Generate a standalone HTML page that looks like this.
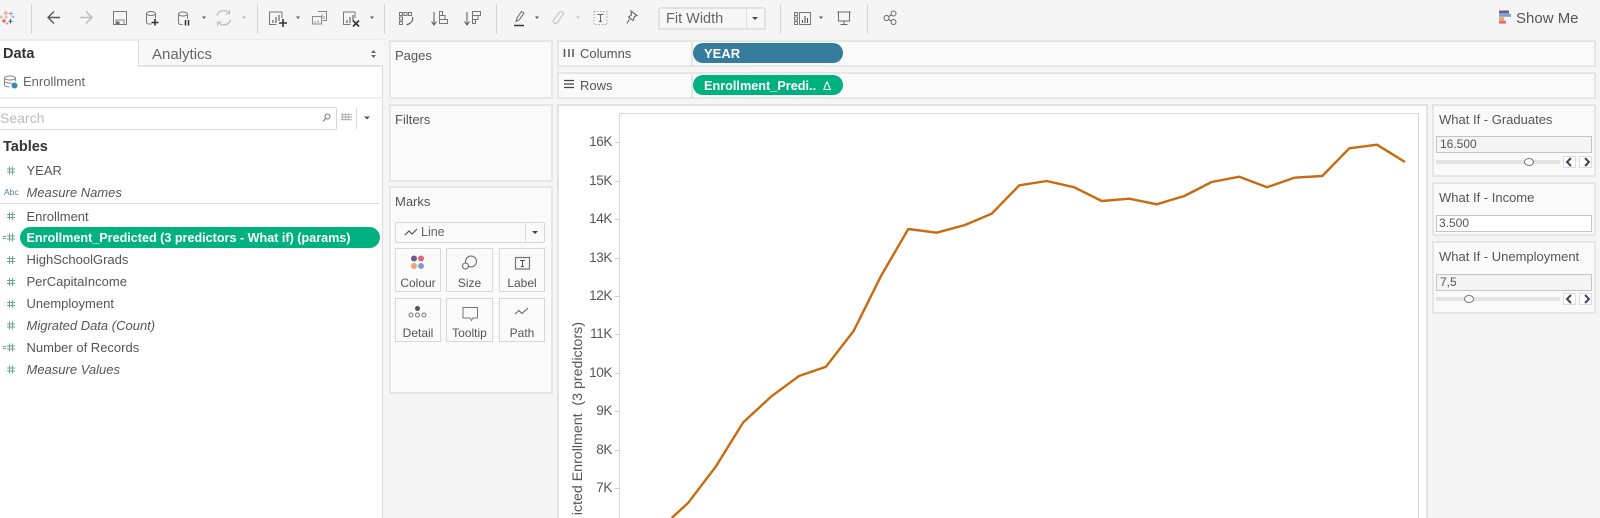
<!DOCTYPE html>
<html><head><meta charset="utf-8"><style>
html,body{margin:0;padding:0;width:1600px;height:518px;overflow:hidden;background:#f5f5f5;font-family:"Liberation Sans",sans-serif;color:#555}
#root{position:absolute;left:0;top:0;width:1600px;height:518px;overflow:hidden;background:#f5f5f5}
div,span{position:absolute;box-sizing:border-box}
span{white-space:nowrap}
.p{background:#fafafa;border:2px solid #e6e6e6}
.t{font-size:13px;color:#555;line-height:16px}
.i{font-style:italic}
.sep{top:4px;width:1px;height:30px;background:#d4d4d4}
.row{left:26.5px;font-size:13px;line-height:16px;color:#555}
.b{background:#fafafa;border:1px solid #d8d8d8;height:44px}
.bl{left:0;right:0;text-align:center;top:26.5px;font-size:12px;line-height:15px;color:#555}
.in{left:1436px;width:156px;height:17px;border:1px solid #c4c4c4;font-size:12px;line-height:15px;color:#555;padding-left:3px}
.sl{left:1436px;width:124px;height:4px;background:#e4e4e4}
.th{width:10px;height:8px;border:1px solid #777;border-radius:50%;background:#fff}
.nb{width:13px;height:12px;background:#fff;border:1px solid #ddd}
.tk{left:615px;width:4px;height:1px;background:#ccc}
.yl{right:988px;font-size:13.5px;letter-spacing:-.4px;color:#555;line-height:16px}
svg{position:absolute;left:0;top:0}
</style></head><body><div id="root">

<svg width="1600" height="40" fill="none" stroke="#777" stroke-width="1">
<!-- logo -->
<g stroke-width="1">
<path d="M6 10.5v5M3.500 13h5" stroke="#e8976b"/>
<path d="M6 15v4M4 17h4" stroke="#f0b79a"/>
<path d="M11 11.500v4M9 13.500h4" stroke="#7fa8bf"/>
<path d="M4 19v4M2 21h4" stroke="#d64550"/>
<path d="M10.500 19v4.500M8.500 21.300h4" stroke="#2c5c8f"/>
<path d="M1 15.500v3M0 17h2.500" stroke="#e8a07a"/>
<path d="M13 15.500v3M11.500 17h3" stroke="#8fb0c4"/>
<path d="M7 22v3M5.500 23.500h3" stroke="#e8a07a"/>
</g>
<!-- back/forward -->
<path d="M60 17.500H48M54 11.500l-6 6 6 6" stroke="#555" stroke-width="1.400"/>
<path d="M80 17.500h12M86 11.500l6 6-6 6" stroke="#bbb" stroke-width="1.400"/>
<!-- save -->
<path d="M113.500 11.500h13v13h-13z"/><path d="M116 24v-4h8v4" stroke="#888"/><path d="M116.500 21.500h3v2.500h-3z" fill="#666" stroke="none"/>
<!-- add data -->
<ellipse cx="151" cy="13.500" rx="4.500" ry="2"/><path d="M146.500 13.500v9q0 1.500 3 1.500h2M155.500 13.500v5"/><path d="M155 19v6.500M151.500 22.500h7" stroke="#333" stroke-width="1.600"/>
<!-- pause -->
<ellipse cx="183" cy="14" rx="4.500" ry="2"/><path d="M178.500 14v9q0 1.500 3 1.500h1M187.500 14v5"/><path d="M185.500 20v5.500M188.500 20v5.500" stroke="#333" stroke-width="1.500"/>
<path d="M202 16.500h4l-2 2.500z" fill="#555" stroke="none"/>
<!-- refresh -->
<path d="M217 15.500a7 7 0 0 1 12-2.500M230.500 20a7 7 0 0 1-12 2.500" stroke="#bbb" stroke-width="1.300"/><path d="M229.500 10v4h-4M217.500 26v-4h4" stroke="#bbb"/>
<path d="M242 16.500h4l-2 2.500z" fill="#bbb" stroke="none"/>
<!-- add chart -->
<path d="M282 12h-12.500v12.500h7"/><path d="M282 12v6"/><path d="M273 23v-3M276 23v-6M279 21v-6" stroke="#666" stroke-width="1.200"/><path d="M283 19v8M279 23h8" stroke="#333" stroke-width="1.600"/>
<path d="M296 16.500h4l-2 2.500z" fill="#555" stroke="none"/>
<!-- duplicate -->
<path d="M318 11.500h8.500v9h-4M312.500 16.500h9v7.500h-9z" stroke="#888"/><path d="M315 23v-2M318 23v-3M322 19v-5M324 19v-3" stroke="#999"/>
<!-- clear -->
<path d="M355 12h-11.500v12.500h7M355 12v6"/><path d="M347 23v-3M350 23v-6M353 21v-6" stroke="#666" stroke-width="1.200"/><path d="M353 20.500l6 6M359 20.500l-6 6" stroke="#333" stroke-width="1.600"/>
<path d="M370 16.500h4l-2 2.500z" fill="#555" stroke="none"/>
<!-- swap -->
<path d="M399.500 12.500h3v3h-3zM404 12.500h3v3h-3zM408.500 12.500h3v3h-3zM399.500 17h3v3h-3zM399.500 21.500h3v3h-3z"/><path d="M412.500 17c1 4-2 7-6 7.500" stroke="#555"/><path d="M410.500 23l-3 2" stroke="#555"/>
<!-- sort asc -->
<path d="M434 12v12M431.500 21.500l2.500 3.500 2.500-3.500" stroke="#555"/><path d="M439.500 11.500h3v4h-3zM439.500 15.500h5.500v4h-5.500zM439.500 19.500h8v4h-8z"/>
<!-- sort desc -->
<path d="M467 12v12M464.500 21.500l2.500 3.500 2.500-3.500" stroke="#555"/><path d="M472.500 11.500h8v4h-8zM472.500 15.500h5.500v4h-5.500zM472.500 19.500h3v4h-3z"/>
<!-- highlight -->
<path d="M516 21.500l1-3.500 4.500-6.500 2.500 1.500-4.500 6.500z" stroke="#666"/><path d="M514 25.500h10" stroke="#333" stroke-width="1.500"/>
<path d="M535 16.500h4l-2 2.500z" fill="#555" stroke="none"/>
<!-- clip -->
<path d="M554 19l6-7q3-1.500 3.500 1.500l-6 9q-2 2-3.500 .5t0-4l5-6" stroke="#c4c4c4" stroke-width="1.200"/>
<path d="M576 16.500h4l-2 2.500z" fill="#c4c4c4" stroke="none"/>
<!-- text -->
<path d="M594 11.500h13v13h-13z" stroke="#aaa" stroke-dasharray="1.500 1.500"/><path d="M597.500 14.500h6M600.500 14.500v7M599 21.500h3" stroke="#666"/>
<!-- pin -->
<path d="M631 11l6 4.500-2.500 1-1.500 4-4.500-3.500 3-2zM629.500 19l-2.500 4.500" stroke="#666" stroke-width="1.100"/>
<!-- show mark labels -->
<path d="M794.500 12.500h3v3h-3zM794.500 17h3v3h-3zM794.500 21.500h3v3h-3zM799.500 12.500h11v12h-11z"/><path d="M802.500 23v-3M805 23v-7M807.500 23v-5" stroke="#555" stroke-width="1.100"/>
<path d="M819 16.500h4l-2 2.500z" fill="#555" stroke="none"/>
<!-- presentation -->
<path d="M837 12h14M838.500 12.500v8.500h11v-8.500M844 21v3.500M840.500 24.500h7" stroke="#666"/>
<!-- share -->
<circle cx="886.500" cy="18" r="2.500" stroke="#666"/><circle cx="893.500" cy="13.500" r="2.500" stroke="#666"/><circle cx="893.500" cy="22" r="2.500" stroke="#666"/><path d="M888.500 16.500l3-1.500M888.700 19.500l3 1.500" stroke="#666"/>
<!-- show me icon -->
<g stroke="none"><rect x="1499" y="10.500" width="10" height="3" fill="#6d5b8f"/><rect x="1499" y="13.800" width="12" height="3" fill="#7ba7c9"/><rect x="1499" y="17.200" width="5" height="3" fill="#eda36e"/><rect x="1499" y="20.600" width="7" height="3" fill="#ea6a6a"/></g>
</svg>
<div class="sep" style="left:31px"></div><div class="sep" style="left:257px"></div><div class="sep" style="left:384px"></div><div class="sep" style="left:496px"></div><div class="sep" style="left:780px"></div><div class="sep" style="left:867px"></div>
<div style="left:658px;top:7px;width:108px;height:23px;border:2px solid #e2e2e2;border-radius:2px;background:#f7f7f7"></div>
<div style="left:746px;top:8px;width:1px;height:21px;background:#e0e0e0"></div>
<span style="left:666px;top:10px;font-size:14.5px;line-height:18px;color:#666">Fit Width</span>
<svg width="1600" height="40"><path d="M752 17h6l-3 3z" fill="#444"/></svg>
<span style="left:1516px;top:9.5px;font-size:15px;line-height:18px;color:#555">Show Me</span>

<!-- left pane -->
<div style="left:0;top:40px;width:383px;height:478px;background:#fff;border-right:1px solid #dcdcdc"></div>
<div style="left:0;top:39px;width:383px;height:2px;background:#ececec"></div>
<div style="left:138px;top:40px;width:245px;height:27px;background:#f8f8f8;border-left:1px solid #ddd;border-bottom:2px solid #e4e4e4"></div>
<span style="left:3px;top:45px;font-size:14.5px;font-weight:bold;line-height:18px;color:#333">Data</span>
<span style="left:152px;top:46px;font-size:15px;line-height:18px;color:#666">Analytics</span>
<svg width="383" height="100"><path d="M371 53l2.500-3 2.500 3zM371 55l2.500 3 2.500-3z" fill="#666"/>
<ellipse cx="10" cy="78" rx="5.500" ry="2" fill="none" stroke="#888"/><path d="M4.500 78v7q0 1.500 5 2M15.500 78v3" fill="none" stroke="#888"/><path d="M5 82q3 1.500 7 1" fill="none" stroke="#888"/><circle cx="14.500" cy="85.500" r="3" fill="#3d86b0"/></svg>
<span style="left:23px;top:74px;font-size:13px;line-height:16px;color:#666">Enrollment</span>
<div style="left:0;top:97px;width:382px;height:2px;background:#f0f0f0"></div>
<div style="left:-2px;top:107px;width:339px;height:23px;border:1px solid #d6d6d6;border-radius:2px;background:#fff"></div>
<span style="left:0;top:110px;font-size:14px;line-height:17px;color:#bbb">Search</span>
<svg width="383" height="135" style="z-index:2" fill="none"><circle cx="327.500" cy="116.500" r="2.500" stroke="#777"/><path d="M325.500 118.500l-2.500 3" stroke="#777"/>
<path d="M341.500 114.500h10M341.500 117h10M341.500 119.500h10" stroke="#888" stroke-width="1.500" stroke-dasharray="2 1"/>
<path d="M356.500 107.500v22" stroke="#ddd"/><path d="M364 116.500h6l-3 3z" fill="#555"/></svg>
<span style="left:3px;top:138px;font-size:14.5px;font-weight:bold;line-height:18px;color:#333">Tables</span>
<span class="row" style="top:163px">YEAR</span>
<span style="left:4px;top:187px;font-size:8.5px;line-height:11px;color:#4f7f9f">Abc</span><span class="row i" style="top:185px">Measure Names</span>
<div style="left:0;top:203px;width:380px;height:1px;background:#dcdcdc"></div>
<span class="row" style="top:209px">Enrollment</span>
<div style="left:20px;top:227px;width:360px;height:21px;border-radius:11px;background:#00b180"></div>
<span class="row" style="top:230px;color:#fff;font-weight:bold;font-size:12.6px">Enrollment_Predicted (3 predictors - What if) (params)</span>
<span class="row" style="top:252px">HighSchoolGrads</span>
<span class="row" style="top:274px">PerCapitaIncome</span>
<span class="row" style="top:296px">Unemployment</span>
<span class="row i" style="top:318px">Migrated Data (Count)</span>
<span class="row" style="top:340px">Number of Records</span>
<span class="row i" style="top:362px">Measure Values</span>
<svg width="40" height="400" fill="none" stroke="#6aa892" stroke-width="1">
<path d="M9.500 166.500v8M12.500 166.500v8M7 169h8M7 172h8"/>
<path d="M9.500 212v8M12.500 212v8M7 214.500h8M7 217.500h8"/>
<path d="M9.500 233.500v8M12.500 233.500v8M7 236h8M7 239h8M3 236.500h3M3 238.500h3"/>
<path d="M9.500 256v8M12.500 256v8M7 258.500h8M7 261.500h8"/>
<path d="M9.500 278v8M12.500 278v8M7 280.500h8M7 283.500h8"/>
<path d="M9.500 300v8M12.500 300v8M7 302.500h8M7 305.500h8"/>
<path d="M9.500 321.500v8M12.500 321.500v8M7 324h8M7 327h8"/>
<path d="M9.500 343.500v8M12.500 343.500v8M7 346h8M7 349h8M3 346.500h3M3 348.500h3"/>
<path d="M9.500 365.500v8M12.500 365.500v8M7 368h8M7 371h8"/>
</svg>

<!-- cards -->
<div class="p" style="left:389px;top:40px;width:164px;height:59px"></div>
<span class="t" style="left:395px;top:48px">Pages</span>
<div class="p" style="left:389px;top:104px;width:164px;height:78px"></div>
<span class="t" style="left:395px;top:112px">Filters</span>
<div class="p" style="left:389px;top:186px;width:164px;height:208px"></div>
<span class="t" style="left:395px;top:194px">Marks</span>
<div style="left:395px;top:222px;width:150px;height:21px;border:1px solid #d8d8d8;background:#fafafa;border-radius:2px"></div>
<div style="left:525px;top:223px;width:1px;height:19px;background:#ddd"></div>
<span style="left:421px;top:225px;font-size:12.5px;line-height:15px;color:#666">Line</span>
<div class="b" style="left:395px;top:248px;width:46px"><span class="bl">Colour</span></div>
<div class="b" style="left:446px;top:248px;width:47px"><span class="bl">Size</span></div>
<div class="b" style="left:499px;top:248px;width:46px"><span class="bl">Label</span></div>
<div class="b" style="left:395px;top:298px;width:46px"><span class="bl">Detail</span></div>
<div class="b" style="left:446px;top:298px;width:47px"><span class="bl">Tooltip</span></div>
<div class="b" style="left:499px;top:298px;width:46px"><span class="bl">Path</span></div>
<svg width="1600" height="400" fill="none" style="z-index:2">
<path d="M405 235l4-4 3 3 5-5" stroke="#555" stroke-width="1.200"/><path d="M532 231h6l-3 3z" fill="#444"/>
<circle cx="414" cy="258.500" r="3" fill="#6d5b8f"/><circle cx="421" cy="258.500" r="3" fill="#e8637a"/><circle cx="414" cy="266" r="3" fill="#eda36e"/><circle cx="421" cy="266" r="3" fill="#7c9fcf"/>
<circle cx="471" cy="261.500" r="5.500" stroke="#666"/><circle cx="465.500" cy="266" r="3" stroke="#666" fill="#fafafa"/>
<path d="M515.500 257.500h14v11.500h-14z" stroke="#777" stroke-width="1.200"/><path d="M520 260.500h5M522.500 260.500v6M521 266.500h3" stroke="#555"/>
<circle cx="417.500" cy="308.500" r="2.500" fill="#555"/><circle cx="411" cy="315" r="2" stroke="#777"/><circle cx="417.500" cy="315" r="2" stroke="#777"/><circle cx="424" cy="315" r="2" stroke="#777"/>
<path d="M463 307.500h14.500v10.500h-4.500l-1.500 2.500-1.500-2.500h-7z" stroke="#777"/>
<path d="M515 314l4-3.500 3 3 6-5.500" stroke="#666" stroke-width="1.100"/>
</svg>

<div class="p" style="left:557px;top:40px;width:1039px;height:27px"></div>
<div style="left:691px;top:41px;width:2px;height:25px;background:#e6e6e6"></div>
<div class="p" style="left:557px;top:72px;width:1039px;height:27px"></div>
<div style="left:691px;top:73px;width:2px;height:25px;background:#e6e6e6"></div>
<svg width="1600" height="100"><path d="M564.500 49v8M569 49v8M573 49v8" stroke="#555" stroke-width="1.500"/><path d="M564 80.500h10M564 84h10M564 87.500h10" stroke="#444" stroke-width="1.300"/></svg>
<span class="t" style="left:580px;top:46px">Columns</span>
<span class="t" style="left:580px;top:78px">Rows</span>
<div style="left:693px;top:43px;width:150px;height:20px;border-radius:10px;background:#367c9d"></div>
<span style="left:704px;top:45.5px;font-size:13px;font-weight:bold;line-height:16px;color:#fff">YEAR</span>
<div style="left:693px;top:75px;width:150px;height:20px;border-radius:10px;background:#00b180"></div>
<span style="left:704px;top:77.5px;font-size:12.7px;font-weight:bold;line-height:16px;color:#fff">Enrollment_Predi..</span>
<span style="left:823px;top:77.5px;font-size:12px;line-height:16px;color:#fff">Δ</span>

<!-- chart -->
<div style="left:557px;top:104px;width:871px;height:414px;background:#fff;border:2px solid #e2e2e2;border-bottom:0"></div>
<div style="left:619px;top:113px;width:800px;height:405px;border:1px solid #d8d8d8;border-bottom:0;background:#fff"></div>
<div class="tk" style="top:142px"></div><span class="yl" style="top:134px">16K</span>
<div class="tk" style="top:181px"></div><span class="yl" style="top:173px">15K</span>
<div class="tk" style="top:219px"></div><span class="yl" style="top:211px">14K</span>
<div class="tk" style="top:258px"></div><span class="yl" style="top:250px">13K</span>
<div class="tk" style="top:296px"></div><span class="yl" style="top:288px">12K</span>
<div class="tk" style="top:334px"></div><span class="yl" style="top:326px">11K</span>
<div class="tk" style="top:373px"></div><span class="yl" style="top:365px">10K</span>
<div class="tk" style="top:411px"></div><span class="yl" style="top:403px">9K</span>
<div class="tk" style="top:450px"></div><span class="yl" style="top:442px">8K</span>
<div class="tk" style="top:488px"></div><span class="yl" style="top:480px">7K</span>
<svg width="1600" height="518">
<text transform="translate(582 322) rotate(-90)" text-anchor="end" font-family="Liberation Sans" font-size="14.2" fill="#555">icted Enrollment&#160;&#160;(3 predictors)</text>
<polyline fill="none" stroke="#c96a0e" stroke-width="2.400" stroke-linejoin="round" points="671.700,518 688.300,502.700 715.700,466.700 743.300,422.300 771,396.700 799,376 826,366.700 853.600,331 881,276 908.300,229 936.700,232.700 965,225 991.700,213.700 1019.300,185.300 1046.700,181 1074.300,187.300 1101.700,201 1129.300,198.700 1156.700,204.300 1184.300,196 1211.700,182 1239.300,176.700 1267,187.300 1294.300,177.700 1322.300,176 1349.300,148.300 1377,144.700 1405,162"/>
</svg>

<!-- right cards -->
<div class="p" style="left:1432px;top:104px;width:164px;height:73px"></div>
<span class="t" style="left:1439px;top:112px">What If - Graduates</span>
<div class="in" style="top:136px;background:#f4f4f4">16.500</div>
<div class="sl" style="top:160px"></div><div class="th" style="left:1524px;top:158px"></div>
<div class="nb" style="left:1563px;top:156px"></div><div class="nb" style="left:1579px;top:156px"></div>
<div class="p" style="left:1432px;top:182px;width:164px;height:54px"></div>
<span class="t" style="left:1439px;top:190px">What If - Income</span>
<div class="in" style="top:215px;background:#fff;padding-left:2px">3.500</div>
<div class="p" style="left:1432px;top:241px;width:164px;height:73px"></div>
<span class="t" style="left:1439px;top:249px">What If - Unemployment</span>
<div class="in" style="top:274px;background:#f4f4f4">7,5</div>
<div class="sl" style="top:297px"></div><div class="th" style="left:1464px;top:295px"></div>
<div class="nb" style="left:1563px;top:293px"></div><div class="nb" style="left:1579px;top:293px"></div>
<svg width="1600" height="320" fill="none" stroke="#3a4a5e" stroke-width="2" style="z-index:3">
<path d="M1571 158l-4 4 4 4M1585 158l4 4-4 4M1571 295l-4 4 4 4M1585 295l4 4-4 4"/>
</svg>
</div></body></html>
